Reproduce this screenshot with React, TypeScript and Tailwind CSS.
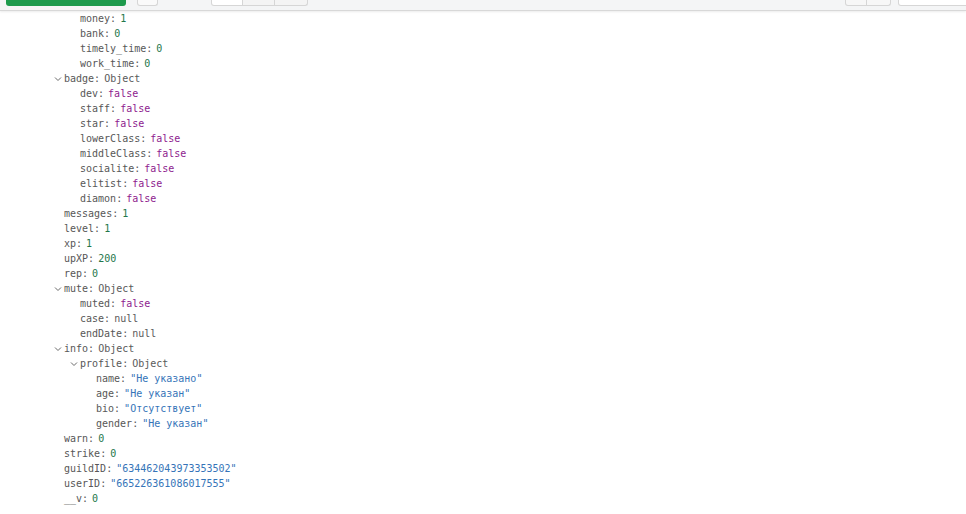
type Val = string | number | boolean | null | { [k: string]: Val };

const data: [string, Val][] = [
  ['money', 1],
  ['bank', 0],
  ['timely_time', 0],
  ['work_time', 0],
];

const rest: [string, Val][] = [
  ['badge', { dev: false, staff: false, star: false, lowerClass: false, middleClass: false, socialite: false, elitist: false, diamon: false }],
  ['messages', 1],
  ['level', 1],
  ['xp', 1],
  ['upXP', 200],
  ['rep', 0],
  ['mute', { muted: false, case: null, endDate: null }],
  ['info', { profile: { name: 'Не указано', age: 'Не указан', bio: 'Отсутствует', gender: 'Не указан' } }],
  ['warn', 0],
  ['strike', 0],
  ['guildID', '634462043973353502'],
  ['userID', '665226361086017555'],
  ['__v', 0],
];

const Chevron = () => (
  <svg width="8" height="8" viewBox="0 0 8 8" className="absolute left-[-10px] top-[4px]">
    <path d="M1 2.5 L4 5.5 L7 2.5" fill="none" stroke="#6b6b6b" strokeWidth="1" />
  </svg>
);

const Value = ({v}: {v: Val}) => {
  if (v === null) return <span className="text-[#5a5a5a]">null</span>;
  if (typeof v === 'number') return <span className="text-[#24774b]">{v}</span>;
  if (typeof v === 'boolean') return <span className="text-[#8e1b8e]">{String(v)}</span>;
  if (typeof v === 'string') return <span className="text-[#3574b8]">"{v}"</span>;
  return <span className="text-[#5a5a5a]">Object</span>;
};

const Row = ({k, v, depth}: {k: string; v: Val; depth: number}) => {
  const isObj = v !== null && typeof v === 'object';
  return (
    <>
      <div className="h-[15px] flex items-center whitespace-pre" style={{paddingLeft: depth * 16}}>
        <span className="relative text-[#575757]">
          {isObj && <Chevron/>}
          {k}:
        </span>
        <span className="ml-[4px]"><Value v={v}/></span>
      </div>
      {isObj && Object.entries(v as object).map(([ck, cv]) => (
        <Row key={ck} k={ck} v={cv as Val} depth={depth + 1}/>
      ))}
    </>
  );
};

export default function App() {
  return (
    <div className="w-[966px] h-[514px] bg-white overflow-hidden">
      <div className="h-[11px] bg-[#f4f5f6] border-b border-[#d8d8d8] shadow-[0_1px_2px_rgba(0,0,0,0.08)] relative">
        <div className="absolute left-[6px] top-0 w-[120px] h-[6px] bg-[#1d9a4c] rounded-b-[3px]"/>
        <div className="absolute left-[137px] top-0 w-[21px] h-[6px] border border-t-0 border-[#d6d6d6] rounded-b-[3px] bg-[#fafafa]"/>
        <div className="absolute left-[211px] top-0 flex h-[6px]">
          <div className="w-[32px] border border-t-0 border-[#d6d6d6] bg-white rounded-bl-[3px]"/>
          <div className="w-[32px] border border-t-0 border-l-0 border-[#d6d6d6] bg-[#f4f4f4]"/>
          <div className="w-[33px] border border-t-0 border-l-0 border-[#d6d6d6] bg-[#f4f4f4] rounded-br-[3px]"/>
        </div>
        <div className="absolute left-[845px] top-0 flex h-[6px]">
          <div className="w-[22px] border border-t-0 border-[#d6d6d6] bg-[#f7f7f7] rounded-bl-[3px]"/>
          <div className="w-[24px] border border-t-0 border-l-0 border-[#d6d6d6] bg-[#f7f7f7] rounded-br-[3px]"/>
        </div>
        <div className="absolute left-[898px] top-0 w-[80px] h-[6px] border border-t-0 border-[#d6d6d6] bg-white rounded-bl-[3px]"/>
      </div>
      <div className="text-[10px] leading-[15px]" style={{fontFamily: '"DejaVu Sans Mono", monospace'}}>
        {data.map(([k, v]) => <Row key={k} k={k} v={v} depth={5}/>)}
        {rest.map(([k, v]) => <Row key={k} k={k} v={v} depth={4}/>)}
      </div>
    </div>
  );
}
